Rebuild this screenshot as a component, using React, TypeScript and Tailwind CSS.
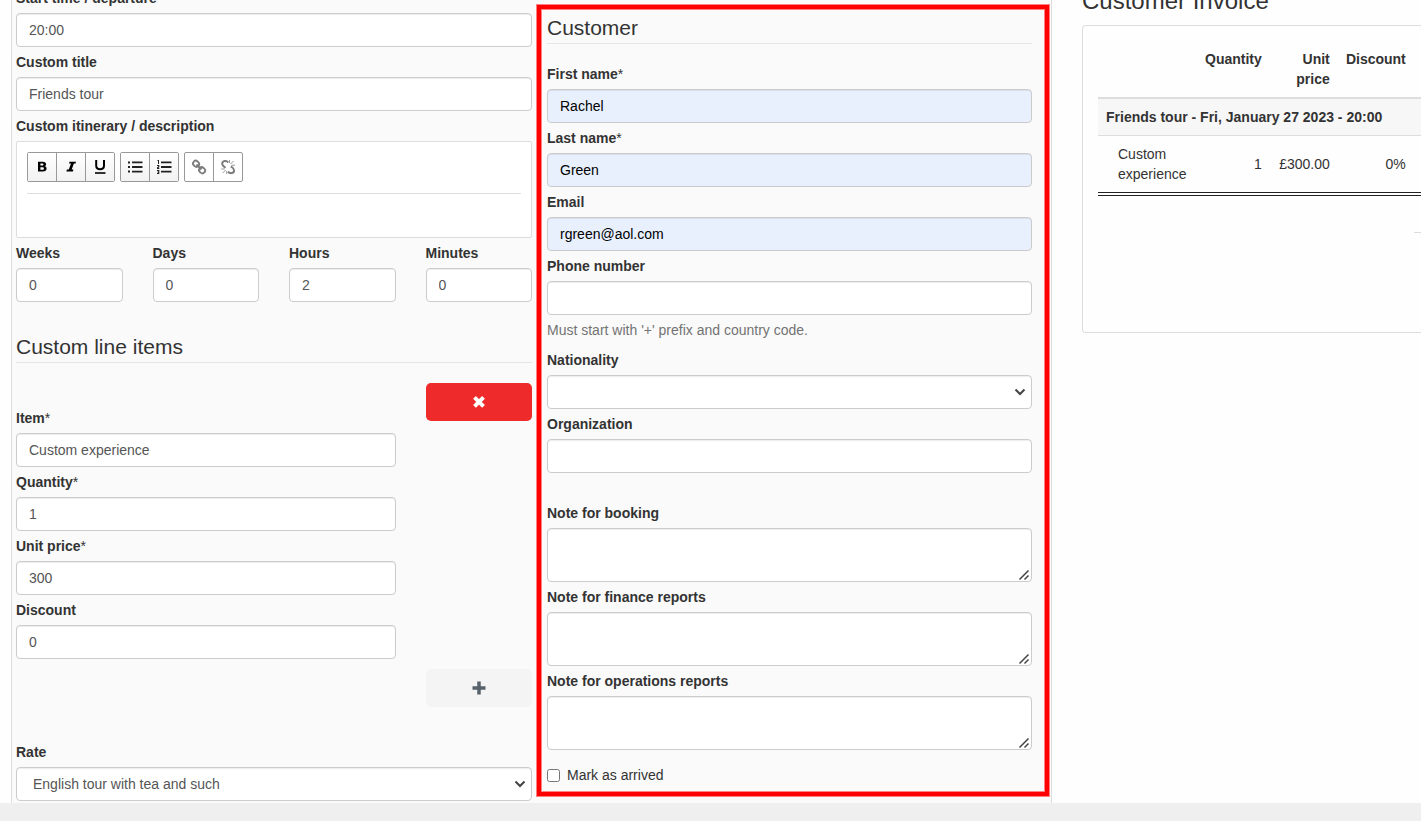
import { useState, type ComponentProps, type ReactNode } from 'react';

// Shared control styles
const controlClass = 'block w-full h-[34px] border border-[#ccc] rounded text-sm shadow-[inset_0_1px_1px_rgba(0,0,0,0.075)]';

interface FieldProps { id: string; label: string; required?: boolean; children: ReactNode; }
interface TextFieldProps { id: string; label: string; value?: string; required?: boolean; filled?: boolean; }

function Field({ id, label, required, children }: FieldProps) {
    return (
        <div className="mb-[5px]">
            <label htmlFor={id} className="block mb-[5px] text-sm leading-5 font-bold">
                {label}{required && <span className="font-normal">*</span>}
            </label>
            {children}
        </div>
    );
}

function TextField({ id, label, value = '', required, filled }: TextFieldProps) {
    const [current, setCurrent] = useState<string>(value);
    return (
        <Field id={id} label={label} required={required}>
            <input id={id} type="text" value={current} onChange={(e) => setCurrent(e.target.value)} className={`${controlClass} px-3 ${filled ? 'bg-[#e8f0fe] text-black' : 'bg-white text-[#555]'}`} />
        </Field>
    );
}

function Select(props: ComponentProps<'select'>) {
    return (
        <div className="relative">
            <select {...props} className={`${controlClass} appearance-none pl-4 pr-8 bg-white text-[#555]`} />
            <svg viewBox="0 0 12 8" className="absolute right-1.5 top-[13px] w-3 h-2 pointer-events-none" aria-hidden="true">
                <path d="m1.500 1.500 4.500 4.500 4.500-4.500" fill="none" stroke="#444" strokeWidth="2" />
            </svg>
        </div>
    );
}

function NoteField({ id, label }: { id: string; label: string }) {
    return (
        <Field id={id} label={label}>
            <div className="relative">
                <textarea id={id} className="block w-full h-[54px] px-3 py-1.5 border border-[#ccc] rounded bg-white text-sm text-[#555] resize-none shadow-[inset_0_1px_1px_rgba(0,0,0,0.075)]" />
                <svg viewBox="0 0 12 12" className="absolute right-0.5 bottom-px w-3 h-3 pointer-events-none" aria-hidden="true">
                    <path d="m1.500 10.500 9-9M6.500 10.500l4-4" fill="none" stroke="#444" strokeWidth="1.500" />
                </svg>
            </div>
        </Field>
    );
}

function SectionTitle({ children }: { children: ReactNode }) {
    return <h3 className="mb-5 border-b border-[#e5e5e5] text-[21px] leading-[30px]">{children}</h3>;
}

// Editor toolbar
interface Tool { name: string; icon: ReactNode; disabled?: boolean; }

const toolGroups: Tool[][] = [
    [
        { name: 'Bold', icon: <path d="M4 2.700h4.600c2.200 0 3.500.9 3.500 2.500 0 1-.5 1.700-1.400 2.100 1.200.3 1.900 1.100 1.900 2.300 0 1.800-1.400 2.900-3.700 2.900H4zM6.400 4.400v2.200h1.700c.9 0 1.400-.4 1.400-1.100s-.5-1.100-1.400-1.100zm0 3.900v2.500h2c1 0 1.500-.5 1.500-1.300s-.5-1.200-1.500-1.200z" fill="#000" fillRule="evenodd" /> },
        { name: 'Italic', icon: <path d="M6.500 2.700H13l-.4 1.900h-1.700l-2.200 6h1.700l-.5 1.900H3.400l.5-1.900h1.900l2.200-6H6z" fill="#000" /> },
        { name: 'Underline', icon: <g fill="none"><path d="M4.200 1v5.600c0 2.700 1.500 3.700 3.900 3.700s3.900-1 3.900-3.700V1" stroke="#000" strokeWidth="2" /><path d="M3 14h10.500" stroke="#333" strokeWidth="2" /></g> },
    ],
    [
        { name: 'Bulleted list', icon: <path d="M1 2.500h2v2H1zM1 7h2v2H1zM1 11.500h2v2H1zM5 2.500h10.500v1.800H5zM5 7h10.500v2H5zM5 11.700h10.500v1.800H5z" fill="#222" /> },
        { name: 'Numbered list', icon: <path d="M1.500 1H3v4H2V2h-.5zM1 6h2.300v2.300L2.300 9h1v1H1V8.500L2.200 7.500V7H1zM1 11h2.300v4H1v-1h1.200v-.6H1.500v-.8h.7V12H1zM5 2.500h10.500v1.800H5zM5 7h10.500v2H5zM5 11.700h10.500v1.800H5z" fill="#222" /> },
    ],
    [
        { name: 'Link', disabled: true, icon: <g fill="none" stroke="#7d7d7d" strokeWidth="1.900"><rect x="2" y="2" width="6.200" height="5.400" rx="2.600" transform="rotate(42 5 4.700)" /><rect x="8" y="8.500" width="6.200" height="5.400" rx="2.600" transform="rotate(42 11 11.200)" /><path d="m5.500 5.500 5 5" /></g> },
        { name: 'Unlink', disabled: true, icon: <g fill="none" stroke="#7d7d7d"><path d="M8.300 3.500C6.600 1.200 2.300 1.600 2.200 4.800c0 2 1.600 2.700 3.300 4M8 12.700c1.800 2.300 6 1.800 6.100-1.300 0-2-1.600-2.700-3.300-4" strokeWidth="2" /><path d="m10.500 5 3-3M9.500 4V1M11.500 6.200h3.500M5.700 11l-3 3M6.700 12v3M4.700 10H1.200" strokeWidth=".8" /></g> },
    ],
];

function Toolbar() {
    return (
        <div className="flex gap-[5px] pb-[11px] border-b border-[#ddd]">
            {toolGroups.map((group, i) => (
                <div key={i} className="flex border border-[#999] rounded-xs divide-x divide-[#999]">
                    {group.map(tool => (
                        <button key={tool.name} type="button" aria-label={tool.name} disabled={tool.disabled} className="flex items-center justify-center w-[29px] last:w-7 h-7 bg-linear-to-b from-white to-[#f2f2f2] disabled:bg-none">
                            <svg viewBox="0 0 16 16" className="w-4 h-4" aria-hidden="true">{tool.icon}</svg>
                        </button>
                    ))}
                </div>
            ))}
        </div>
    );
}

function BookingColumn() {
    const [rate, setRate] = useState<string>('english');
    return (
        <div>
            <TextField id="start-time" label="Start time / departure" value="20:00" />
            <TextField id="custom-title" label="Custom title" value="Friends tour" />

            {/* Description editor */}
            <div className="mb-[5px]">
                <div id="description-label" className="mb-[5px] text-sm leading-5 font-bold">Custom itinerary / description</div>
                <div className="px-2.5 pt-2.5 border border-[#ddd] rounded-xs bg-white">
                    <Toolbar />
                    <div role="textbox" contentEditable suppressContentEditableWarning aria-labelledby="description-label" className="h-[43px] outline-none" />
                </div>
            </div>

            {/* Duration */}
            <div className="grid grid-cols-4 gap-[30px]">
                <TextField id="weeks" label="Weeks" value="0" />
                <TextField id="days" label="Days" value="0" />
                <TextField id="hours" label="Hours" value="2" />
                <TextField id="minutes" label="Minutes" value="0" />
            </div>

            {/* Line items */}
            <div className="mt-[25px]">
                <SectionTitle>Custom line items</SectionTitle>
                <div className="grid grid-cols-4 gap-x-[30px] items-start">
                    <div className="col-span-3 pt-[25px]">
                        <TextField id="item" label="Item" value="Custom experience" required />
                        <TextField id="quantity" label="Quantity" value="1" required />
                        <TextField id="unit-price" label="Unit price" value="300" required />
                        <TextField id="discount" label="Discount" value="0" />
                    </div>
                    <button type="button" aria-label="Remove item" className="flex items-center justify-center h-[38px] rounded-[5px] bg-[#ee2a2a]">
                        <svg viewBox="0 0 14 14" className="w-3.5 h-3.5" aria-hidden="true"><path d="m2.500 2.300 9 9M11.500 2.300l-9 9" stroke="#fff" strokeWidth="4" /></svg>
                    </button>
                    <button type="button" aria-label="Add item" className="col-start-4 mt-[5px] flex items-center justify-center h-[38px] rounded-[5px] bg-[#f4f4f4]">
                        <svg viewBox="0 0 14 14" className="w-3.5 h-3.5" aria-hidden="true"><path d="M7 .5v13M.5 7h13" stroke="#56616a" strokeWidth="3.500" /></svg>
                    </button>
                </div>
            </div>

            {/* Rate */}
            <div className="mt-[35px]">
                <Field id="rate" label="Rate">
                    <Select id="rate" value={rate} onChange={(e) => setRate(e.target.value)}>
                        <option value="english">English tour with tea and such</option>
                    </Select>
                </Field>
            </div>
        </div>
    );
}

function CustomerColumn() {
    const [arrived, setArrived] = useState<boolean>(false);
    return (
        <section className="mt-[17px] self-start border-4 border-[#f00] pt-1 pr-[13px] pb-[7px] pl-1.5 shadow-[0_0_0_1px_#ff8080,inset_0_0_0_1px_#ff8080]">
            <SectionTitle>Customer</SectionTitle>
            <TextField id="first-name" label="First name" value="Rachel" required filled />
            <TextField id="last-name" label="Last name" value="Green" required filled />
            <TextField id="email" label="Email" value="rgreen@aol.com" filled />
            <TextField id="phone" label="Phone number" />
            <p className="mb-2.5 text-sm leading-5 text-[#737373]">Must start with '+' prefix and country code.</p>
            <Field id="nationality" label="Nationality">
                <Select id="nationality"><option value=""></option></Select>
            </Field>
            <TextField id="organization" label="Organization" />
            <div className="mt-[30px] mb-[15px]">
                <NoteField id="note-booking" label="Note for booking" />
                <NoteField id="note-finance" label="Note for finance reports" />
                <NoteField id="note-operations" label="Note for operations reports" />
            </div>
            <label className="flex items-center gap-[7px] text-sm leading-5">
                <input type="checkbox" checked={arrived} onChange={(e) => setArrived(e.target.checked)} className="w-[13px] h-[13px]" />
                Mark as arrived
            </label>
        </section>
    );
}

function Invoice() {
    return (
        <section className="min-w-0 pl-[30px]">
            <h2 className="mb-[11px] text-2xl leading-[26px]">Customer Invoice</h2>
            <div className="h-[308px] pt-[15px] pl-[15px] border border-r-0 border-[#ddd] rounded-l-sm">
                <table className="w-full border-separate border-spacing-0 text-sm leading-5">
                    <thead>
                        <tr className="align-top text-right">
                            <th className="p-2 w-[99px] border-b-2 border-[#ddd]"></th>
                            <th className="p-2 w-[72px] border-b-2 border-[#ddd]">Quantity</th>
                            <th className="p-2 w-[68px] border-b-2 border-[#ddd]">Unit price</th>
                            <th className="p-2 w-[76px] border-b-2 border-[#ddd]">Discount</th>
                            <th className="border-b-2 border-[#ddd]"></th>
                        </tr>
                    </thead>
                    <tbody>
                        <tr className="bg-[#f7f7f7]">
                            <th colSpan={5} scope="rowgroup" className="p-2 text-left border-b border-[#ddd]">Friends tour - Fri, January 27 2023 - 20:00</th>
                        </tr>
                        <tr className="text-right">
                            <td className="p-2 pl-5 text-left border-b-4 border-double border-[#222]">Custom experience</td>
                            <td className="p-2 border-b-4 border-double border-[#222]">1</td>
                            <td className="p-2 border-b-4 border-double border-[#222]">£300.00</td>
                            <td className="p-2 border-b-4 border-double border-[#222]">0%</td>
                            <td className="border-b-4 border-double border-[#222]"></td>
                        </tr>
                    </tbody>
                    <tfoot>
                        <tr>
                            <td colSpan={4} className="h-[37px]"></td>
                            <td className="border-b border-[#ddd]"></td>
                        </tr>
                    </tfoot>
                </table>
            </div>
        </section>
    );
}

export default function App() {
    return (
        <div className="flex flex-col min-h-screen bg-[#efefef] font-['Liberation_Sans',Arial,sans-serif] text-[#333]">
            <main className="flex-1 overflow-hidden bg-[#fefefe]">
                <div className="-mt-3 pl-[11px] grid grid-cols-[1041fr_369fr]">
                    <form className="grid grid-cols-[516fr_512fr] gap-[5px] pl-1 pr-0.5 -mb-1 border-x border-[#ddd] bg-[#fafafa]">
                        <BookingColumn />
                        <CustomerColumn />
                    </form>
                    <Invoice />
                </div>
            </main>
            <footer className="h-[18px] bg-[#efefef]" />
        </div>
    );
}
